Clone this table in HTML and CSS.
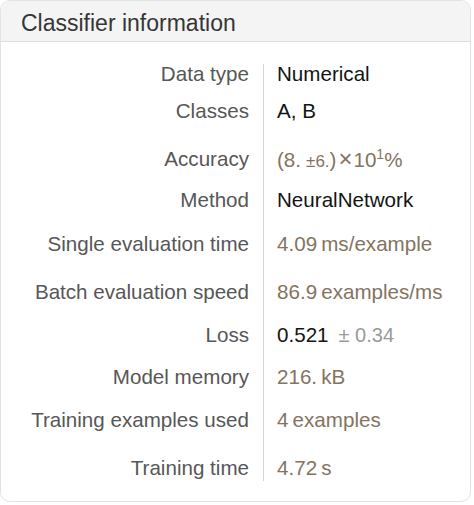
FILE: index.html
```html
<!DOCTYPE html>
<html lang="en">
<head>
<meta charset="utf-8">
<title>Classifier information</title>
<link rel="stylesheet" href="styles.css">
</head>
<body>
<section class="card">
  <header class="card-head">Classifier information</header>
  <div class="info">
    <div class="label">Data type</div><div class="value plain">Numerical</div>
    <div class="label">Classes</div><div class="value plain">A, B</div>
    <div class="label">Accuracy</div><div class="value qty">(8.<span class="pm">±6.</span>)<span class="times">×</span>10<sup class="exp">1</sup>%</div>
    <div class="label">Method</div><div class="value plain">NeuralNetwork</div>
    <div class="label">Single evaluation time</div><div class="value qty">4.09&thinsp;ms/example</div>
    <div class="label">Batch evaluation speed</div><div class="value qty">86.9&thinsp;examples/ms</div>
    <div class="label">Loss</div><div class="value plain">0.521<span class="err">± 0.34</span></div>
    <div class="label">Model memory</div><div class="value qty">216.&thinsp;kB</div>
    <div class="label">Training examples used</div><div class="value qty">4&thinsp;examples</div>
    <div class="label">Training time</div><div class="value qty">4.72&thinsp;s</div>
    <div class="divider"></div>
  </div>
</section>
</body>
</html>
```

FILE: styles.css
```css
* { box-sizing: border-box; }

html, body {
  margin: 0;
  padding: 0;
  background: #ffffff;
}

body {
  font-family: "Liberation Sans", Arial, sans-serif;
}

.card {
  width: 471px;
  border: 1px solid #e3e3e3;
  border-radius: 10px;
  overflow: hidden;
  background: #ffffff;
}

.card-head {
  height: 41px;
  padding: 5px 0 0 20px;
  line-height: 35px;
  font-size: 23px;
  color: #363636;
  background: #f4f4f4;
  border-bottom: 1px solid #dedede;
}

.info {
  display: grid;
  grid-template-columns: 262px 1px 1fr;
  grid-template-rows: 37px 48px 41px 44px 48px 43px 42px 43px 48px 23px;
  padding: 22px 0 20px;
  font-size: 20.6px;
  line-height: 20px;
}

.label {
  grid-column: 1;
  padding-right: 14px;
  text-align: right;
  color: #575757;
  white-space: nowrap;
}

.value {
  grid-column: 3;
  padding-left: 13px;
  white-space: nowrap;
}

.divider {
  grid-column: 2;
  grid-row: 1 / -1;
  background: #d6d6d6;
}

.plain { color: #141414; }

.qty { color: #84745f; }

.pm {
  margin-left: 5px;
  font-size: 17px;
}

.times {
  margin: 0 1px 0 2px;
  font-size: 24px;
}

.exp {
  font-size: 14px;
  line-height: 0;
  vertical-align: 8px;
}

.err {
  margin-left: 10px;
  color: #9a9a9a;
  font-size: 20px;
}
```
